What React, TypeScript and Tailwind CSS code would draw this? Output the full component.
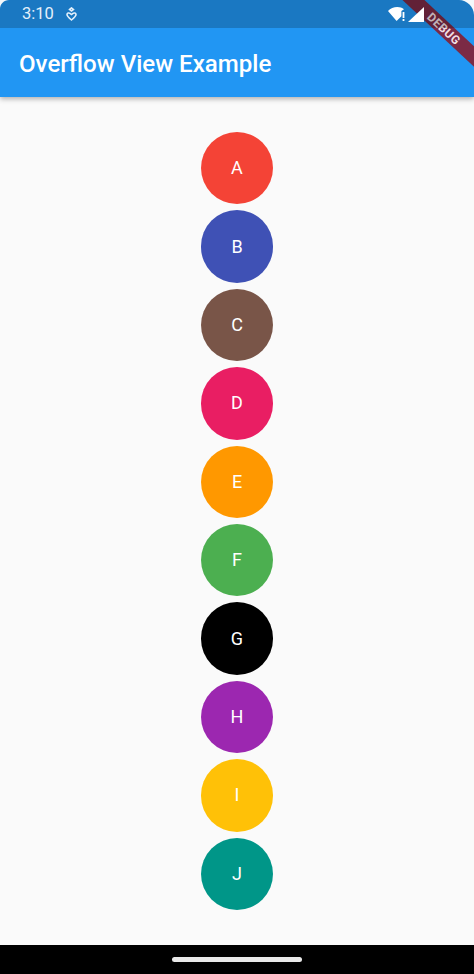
const circles = [
  { label: "A", color: "bg-[#f44336]" },
  { label: "B", color: "bg-[#3f51b5]" },
  { label: "C", color: "bg-[#795548]" },
  { label: "D", color: "bg-[#e91e63]" },
  { label: "E", color: "bg-[#ff9800]" },
  { label: "F", color: "bg-[#4caf50]" },
  { label: "G", color: "bg-[#000000]" },
  { label: "H", color: "bg-[#9c27b0]" },
  { label: "I", color: "bg-[#ffc107]" },
  { label: "J", color: "bg-[#009688]" },
];

// the status bar is a system layer, it sits over the debug banner
function StatusBar() {
  return (
    <div className="absolute top-0 left-0 right-0 z-30 h-[28px] flex items-center justify-between bg-black/20 pl-[22px] pr-[50px]">
      <div className="flex items-center gap-[12px]">
        <span className="text-[16.5px] leading-[28px] text-[#e3f0fb]">3:10</span>
        <svg width="11" height="14" viewBox="0 0 11 14" fill="none" stroke="#e3f0fb" strokeWidth="1.6">
          <path d="M3.6 2.4 L5.5 0.9 L7.4 2.4 L5.5 3.9 Z" />
          <path d="M1 7.6 C1 6.2 2.8 5.4 4 6.4 L5.5 7.6 L7 6.4 C8.2 5.4 10 6.2 10 7.6 C10 9 7.5 11.4 5.5 13 C3.5 11.4 1 9 1 7.6 Z" />
        </svg>
      </div>
      <div className="flex items-center gap-[1px]">
        <svg width="19" height="14" viewBox="0 0 19 14">
          <path d="M0 4 C4 -0.6 12 -1 16 2.2 L13.4 4 L13.4 9.2 L8.6 14 Z" fill="#fff" />
          <rect x="14.6" y="5" width="1.8" height="6" fill="#fff" />
          <rect x="14.6" y="12" width="1.8" height="2" fill="#fff" />
        </svg>
        <svg width="16" height="15" viewBox="0 0 16 15">
          <path d="M16 0 L16 15 L0 15 Z" fill="#fff" />
        </svg>
      </div>
    </div>
  );
}

export default function App() {
  return (
    <div className="relative w-[474px] h-[974px] overflow-hidden flex flex-col bg-[#fafafa] font-['Roboto',sans-serif]">
      <StatusBar />

      <header className="relative z-10 h-[97px] bg-[#2196f3] pt-[28px] shadow-[0_2px_5px_rgba(0,0,0,0.3)]">
        <div className="h-[69px] flex items-center px-[19px] pt-[3px]">
          <h1 className="text-[24.1px] font-medium text-white">Overflow View Example</h1>
        </div>
      </header>

      <main className="flex-1 flex flex-col items-center pt-[35px] gap-[6px]">
        {circles.map((c) => (
          <div
            key={c.label}
            className={`w-[72.4px] h-[72.4px] shrink-0 rounded-full flex items-center justify-center pb-[1px] text-white text-[18px] ${c.color}`}
          >
            {c.label}
          </div>
        ))}
      </main>

      <div className="h-[29px] flex items-center justify-center bg-black">
        <div className="w-[130px] h-[5px] rounded-full bg-[#e8e8e8]" />
      </div>

      {/* debug banner */}
      <div className="absolute top-[21px] right-[-30px] w-[120px] h-[15px] rotate-[43deg] z-20 bg-[#7b2a45] flex items-center justify-center text-[12px] leading-none font-bold tracking-[0.4px] text-[#f0dfe4]">
        DEBUG
      </div>

      {/* rounded screen corners */}
      <svg className="absolute top-0 left-0 z-40" width="9" height="9" viewBox="0 0 9 9">
        <path d="M0 0 H9 C4 0 0 4 0 9 Z" fill="#f4f8fb" />
      </svg>
      <svg className="absolute top-0 right-0 z-40" width="15" height="15" viewBox="0 0 15 15">
        <path d="M15 0 H0 C8 0 15 7 15 15 Z" fill="#f4f8fb" />
      </svg>
    </div>
  );
}
